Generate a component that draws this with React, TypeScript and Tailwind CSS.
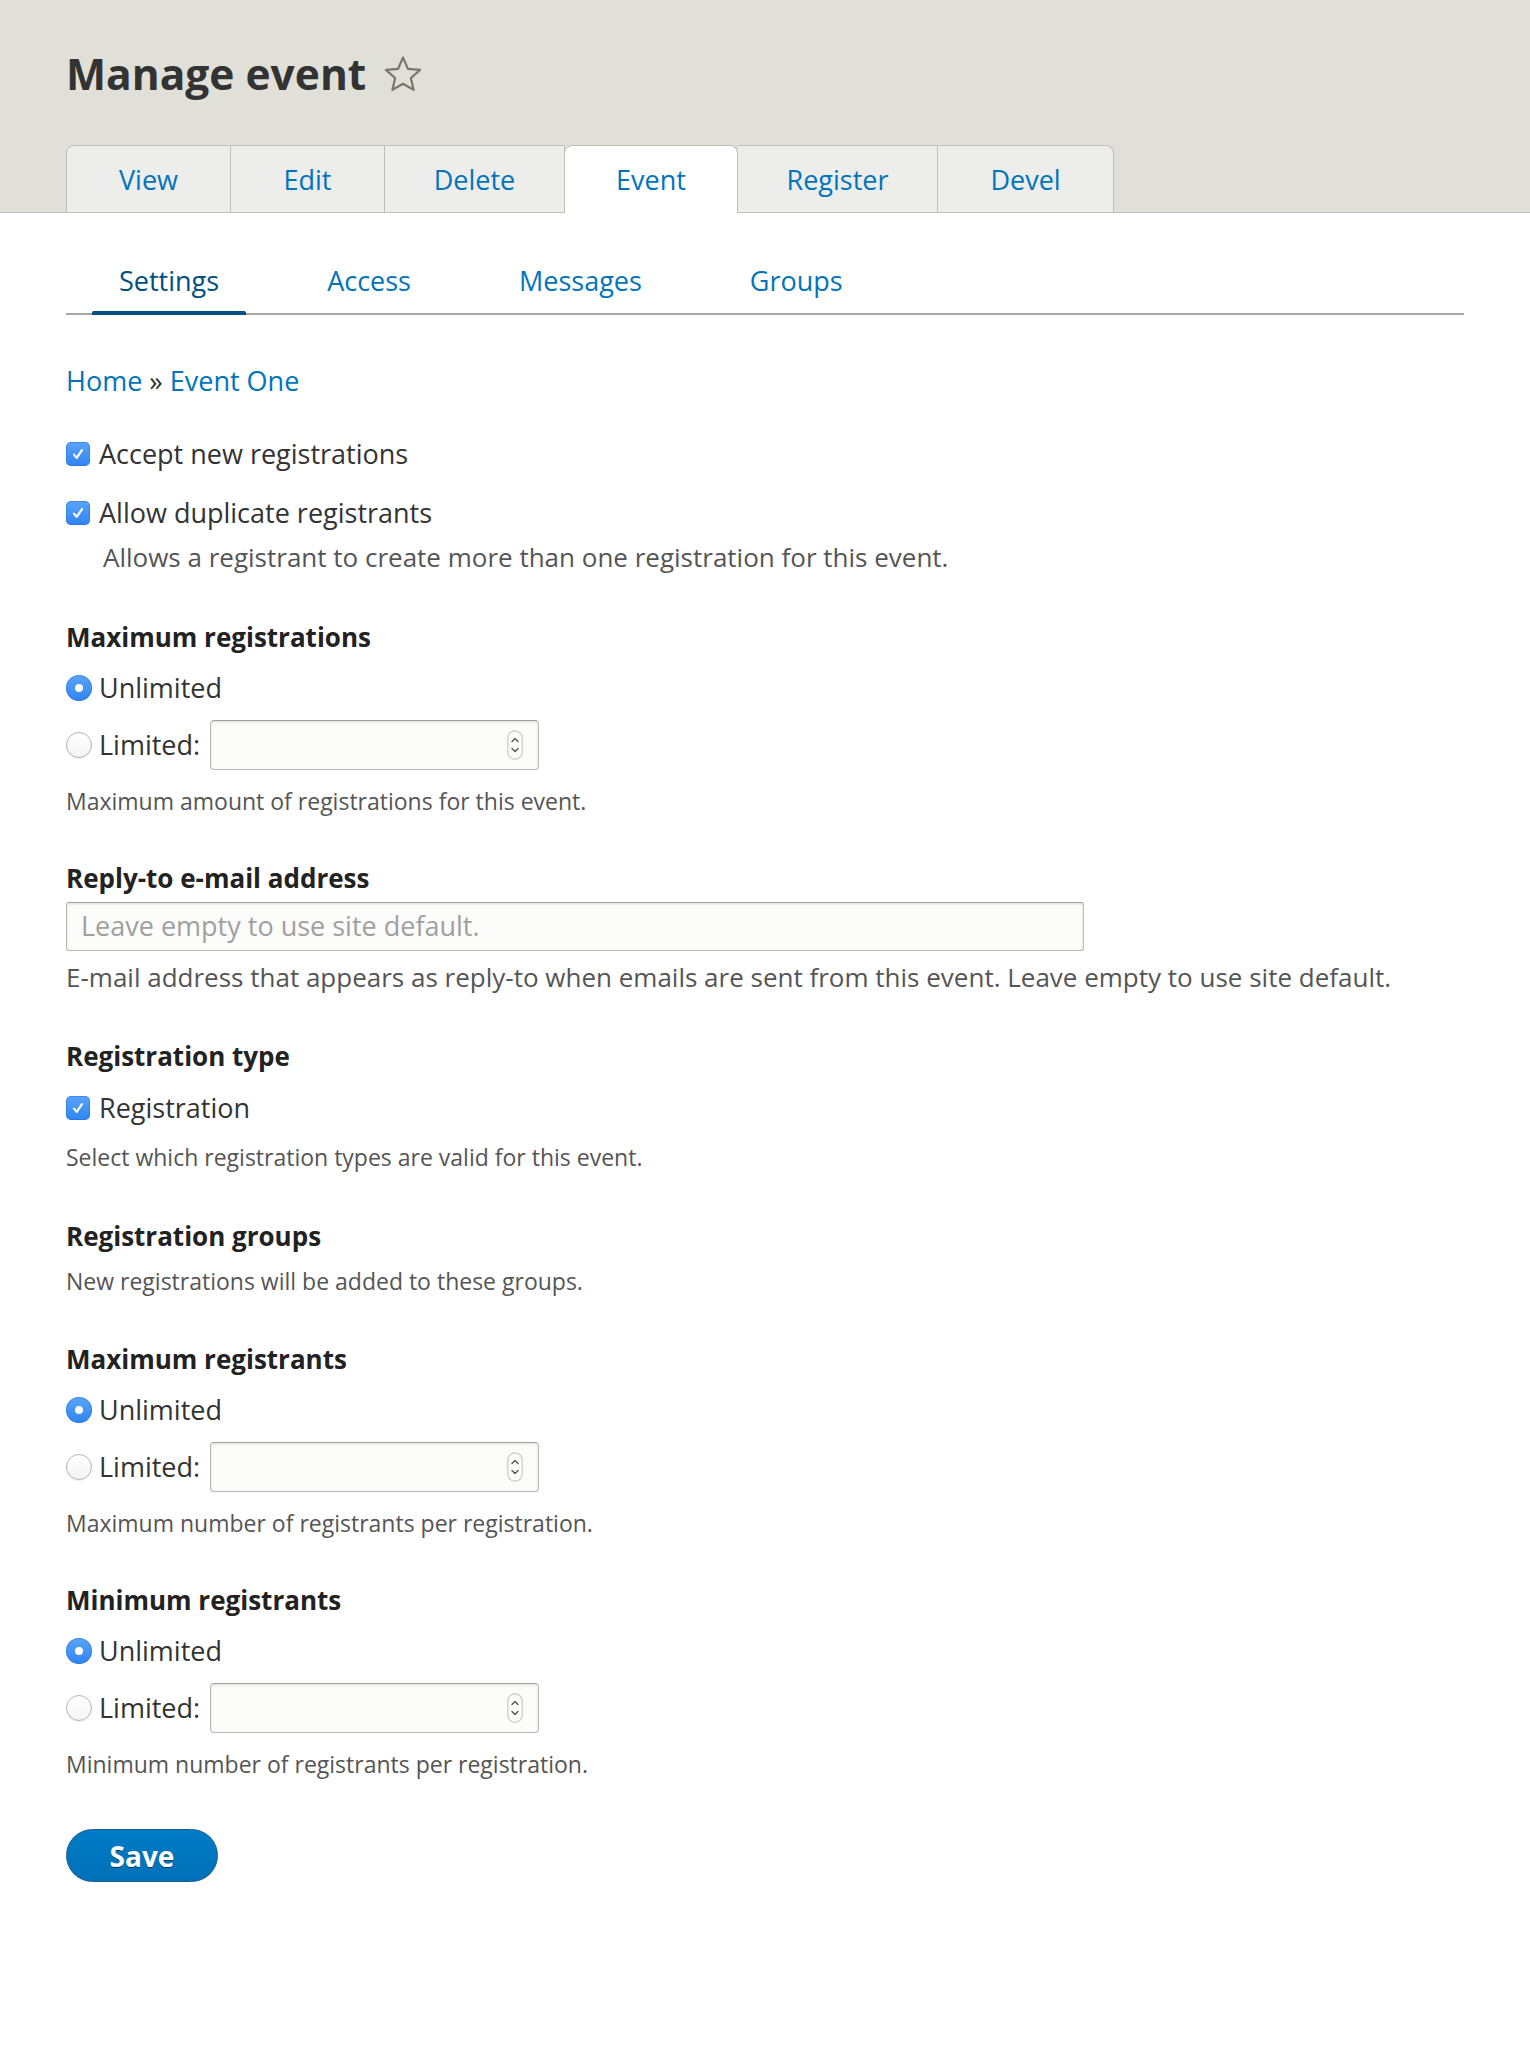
import { ReactNode } from 'react';

const primaryTabs = [
  { label: 'View', width: 'w-[165px]', cls: 'rounded-tl-[8px]' },
  { label: 'Edit', width: 'w-[154px]', cls: '' },
  { label: 'Delete', width: 'w-[180px]', cls: '' },
  { label: 'Event', width: 'w-[173px]', cls: '', active: true },
  { label: 'Register', width: 'w-[200px]', cls: '' },
  { label: 'Devel', width: 'w-[176px]', cls: 'rounded-tr-[8px]' },
];

const secondaryTabs = ['Settings', 'Access', 'Messages', 'Groups'];

function Star() {
  return (
    <svg width="38" height="37" viewBox="0 0 38 37" fill="none" stroke="#77786b" strokeWidth="2.2" strokeLinejoin="round">
      <path d="M19 1.6l4.9 11.2 12.2 1.1-9.2 8.1 2.7 11.9L19 27.7l-10.6 6.2 2.7-11.9-9.2-8.1 12.2-1.1z" />
    </svg>
  );
}

function Checkbox() {
  return (
    <span className="flex h-[24px] w-[24px] items-center justify-center rounded-[5px] bg-gradient-to-b from-[#5aa4f9] to-[#2f84f1] shadow-[inset_0_0_0_1px_rgba(30,100,210,0.4)]">
      <svg width="16" height="16" viewBox="0 0 16 16" fill="none" stroke="#fff" strokeWidth="2.2" strokeLinecap="round" strokeLinejoin="round">
        <path d="M4 8.6l2.7 3.2L12 4.2" />
      </svg>
    </span>
  );
}

function Radio({ checked }: { checked?: boolean }) {
  if (checked) {
    return (
      <span className="flex h-[26px] w-[26px] items-center justify-center rounded-full bg-gradient-to-b from-[#5aa4f9] to-[#2f84f1] shadow-[inset_0_0_0_1px_rgba(30,100,210,0.4)]">
        <span className="h-[8px] w-[8px] rounded-full bg-white" />
      </span>
    );
  }
  return <span className="h-[26px] w-[26px] rounded-full border border-[#b5b5b5] bg-gradient-to-b from-white to-[#f4f4f4] shadow-[0_1px_1px_rgba(0,0,0,0.08)]" />;
}

function Spinner() {
  return (
    <svg width="16" height="30" viewBox="0 0 16 30" fill="none" stroke="#555" strokeWidth="1.4" strokeLinecap="round" strokeLinejoin="round">
      <rect x="0.8" y="0.8" width="14.4" height="28.4" rx="7.2" stroke="#c8c8c8" strokeWidth="1.2" />
      <path d="M5 11.5L8 8.5l3 3" />
      <path d="M5 18.5L8 21.5l3-3" />
    </svg>
  );
}

function NumberInput() {
  return (
    <span className="ml-[3px] flex h-[50px] w-[329px] items-center justify-end rounded-[4px] border border-[#b8b8b8] border-t-[#a0a0a0] bg-[#fcfcfa] pr-[15px] shadow-[inset_0_1px_3px_rgba(0,0,0,0.12)]">
      <Spinner />
    </span>
  );
}

function Heading({ children, className = '' }: { children: ReactNode; className?: string }) {
  return <h3 className={`h-[36px] text-[26px] font-bold leading-[36px] text-[#222] ${className}`}>{children}</h3>;
}

function Desc({ children, className = '' }: { children: ReactNode; className?: string }) {
  return <p className={`h-[30px] text-[23px] leading-[30px] text-[#555] ${className}`}>{children}</p>;
}

function LimitGroup({ title, desc, className = '' }: { title: string; desc: string; className?: string }) {
  return (
    <div className={className}>
      <Heading>{title}</Heading>
      <label className="mt-[15px] flex h-[36px] items-center gap-[7px] text-[27px] text-[#333]">
        <Radio checked />
        <span>Unlimited</span>
      </label>
      <label className="mt-[14px] flex h-[50px] items-center gap-[7px] text-[27px] text-[#333]">
        <Radio />
        <span>Limited:</span>
        <NumberInput />
      </label>
      <Desc className="mt-[16px]">{desc}</Desc>
    </div>
  );
}

export default function App() {
  return (
    <div className="min-h-[2070px] bg-white font-['Open_Sans','Noto_Sans',sans-serif] text-[#333]">
      {/* Header */}
      <div className="border-b border-[#bfbfba] bg-[#e0e0d8]">
        <div className="flex items-center gap-[18px] px-[66px] pt-[50px]">
          <h1 className="h-[48px] text-[42.5px] font-bold leading-[48px] text-[#333]">Manage event</h1>
          <Star />
        </div>
        <ul className="-mb-px mt-[47px] flex px-[66px]">
          {primaryTabs.map((t, i) => (
            <li
              key={t.label}
              className={`${t.width} ${t.cls} flex h-[68px] items-center justify-center border-t border-r border-[#bfbfba] pt-[2px] text-[27px] text-[#0074bd] ${
                i === 0 ? 'border-l' : ''
              } ${t.active ? 'rounded-t-[8px] bg-white' : 'border-b bg-[#ededeb]'}`}
            >
              {t.label}
            </li>
          ))}
        </ul>
      </div>

      <div className="px-[66px]">
        {/* Secondary tabs */}
        <ul className="mt-[37px] flex gap-[54px] border-b-2 border-[#a6a6a6] pl-[26px]">
          {secondaryTabs.map((t, i) => (
            <li key={t} className={`relative flex h-[63px] items-center px-[27px] text-[27px] ${i === 0 ? 'text-[#004f80]' : 'text-[#0074bd]'}`}>
              {t}
              {i === 0 && <span className="absolute bottom-[-2px] left-0 right-0 h-[4px] rounded-t-[2px] bg-[#004f80]" />}
            </li>
          ))}
        </ul>

        {/* Breadcrumb */}
        <div className="mt-[48px] h-[36px] text-[27px] leading-[36px]">
          <a className="text-[#0074bd]">Home</a>
          <span className="text-[#333]"> » </span>
          <a className="text-[#0074bd]">Event One</a>
        </div>

        {/* Options */}
        <label className="mt-[37px] flex h-[36px] items-center gap-[9px] text-[27px]">
          <Checkbox />
          <span>Accept new registrations</span>
        </label>
        <label className="mt-[23px] flex h-[36px] items-center gap-[9px] text-[27px]">
          <Checkbox />
          <span>Allow duplicate registrants</span>
        </label>
        <p className="mt-[10px] h-[32px] pl-[37px] text-[26px] leading-[32px] text-[#555]">
          Allows a registrant to create more than one registration for this event.
        </p>

        <LimitGroup className="mt-[46px]" title="Maximum registrations" desc="Maximum amount of registrations for this event." />

        {/* Reply-to */}
        <div className="mt-[44px]">
          <Heading>Reply-to e-mail address</Heading>
          <div className="mt-[6px] flex h-[49px] w-[1018px] items-center rounded-[3px] border border-[#b8b8b8] border-t-[#a0a0a0] bg-[#fcfcfa] px-[14px] text-[27px] text-[#a0a0a0] shadow-[inset_0_1px_3px_rgba(0,0,0,0.12)]">
            Leave empty to use site default.
          </div>
          <p className="mt-[10px] h-[32px] text-[26px] leading-[32px] text-[#555]">
            E-mail address that appears as reply-to when emails are sent from this event. Leave empty to use site default.
          </p>
        </div>

        {/* Registration type */}
        <div className="mt-[45px]">
          <Heading>Registration type</Heading>
          <label className="mt-[16px] flex h-[36px] items-center gap-[9px] text-[27px]">
            <Checkbox />
            <span>Registration</span>
          </label>
          <Desc className="mt-[16px]">Select which registration types are valid for this event.</Desc>
        </div>

        {/* Registration groups */}
        <div className="mt-[46px]">
          <Heading>Registration groups</Heading>
          <Desc className="mt-[12px]">New registrations will be added to these groups.</Desc>
        </div>

        <LimitGroup className="mt-[45px]" title="Maximum registrants" desc="Maximum number of registrants per registration." />
        <LimitGroup className="mt-[44px]" title="Minimum registrants" desc="Minimum number of registrants per registration." />

        <button className="mt-[50px] h-[53px] w-[152px] rounded-full border border-[#1e5c90] bg-gradient-to-b from-[#007bc6] to-[#0071b8] text-[28px] font-bold text-white [text-shadow:0_1px_rgba(0,0,0,0.5)]">
          Save
        </button>
      </div>
    </div>
  );
}
